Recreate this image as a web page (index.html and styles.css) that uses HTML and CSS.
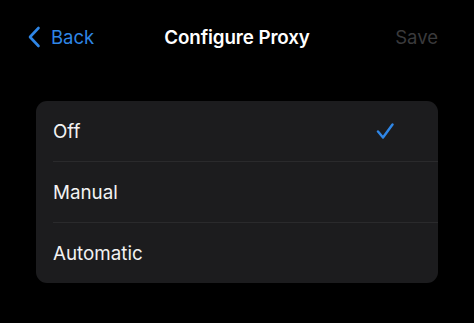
FILE: index.html
```html
<!DOCTYPE html>
<html lang="en">
<head>
  <meta charset="UTF-8">
  <meta name="viewport" content="width=device-width, initial-scale=1.0">
  <title>Configure Proxy</title>
  <link rel="stylesheet" href="styles.css">
</head>
<body>
  <div class="screen">
    <div class="nav-bar">
      <a class="back" href="#">
        <svg class="chevron" width="14" height="22" viewBox="0 0 14 22">
          <path d="M11.5 2 L3 11 L11.5 20" fill="none" stroke="currentColor" stroke-width="2.6" stroke-linecap="round" stroke-linejoin="round"/>
        </svg>
        <span>Back</span>
      </a>
      <div class="title">Configure Proxy</div>
      <div class="save">Save</div>
    </div>

    <div class="list">
      <div class="row">
        <span class="label">Off</span>
        <svg class="check" width="18" height="18" viewBox="0 0 18 18">
          <path d="M2 9.5 L7 15.5 L16.5 2.5" fill="none" stroke="currentColor" stroke-width="2.4" stroke-linecap="round" stroke-linejoin="round"/>
        </svg>
      </div>
      <div class="row">
        <span class="label">Manual</span>
      </div>
      <div class="row">
        <span class="label">Automatic</span>
      </div>
    </div>
  </div>
</body>
</html>
```

FILE: styles.css
```css
body {
  margin: 0;
  background-color: #000;
  font-family: 'Inter', 'Roboto', sans-serif;
  color: #fff;
}
.screen {
  width: 474px;
  height: 323px;
  overflow: hidden;
}
.nav-bar {
  display: grid;
  grid-template-columns: 1fr auto 1fr;
  align-items: center;
  height: 74px;
  padding: 0 36px;
}
.back {
  display: flex;
  align-items: center;
  gap: 10px;
  margin-left: -9px;
  color: #2f86e6;
  text-decoration: none;
  font-size: 18.5px;
}
.chevron {
  display: block;
}
.title {
  font-size: 18.8px;
  font-weight: 600;
  letter-spacing: -0.1px;
}
.save {
  justify-self: end;
  font-size: 18.5px;
  color: #3a3a3c;
}
.list {
  margin: 27px 36px 0 36px;
  background-color: #1c1c1e;
  border-radius: 11px;
  padding-left: 17px;
}
.row {
  display: flex;
  align-items: center;
  justify-content: space-between;
  height: 60px;
  padding-right: 44px;
  border-bottom: 1px solid #2a2a2c;
}
.row:last-child {
  border-bottom: none;
}
.label {
  font-size: 18.8px;
  color: #f2f2f2;
}
.check {
  color: #2f86e6;
  display: block;
}
```
